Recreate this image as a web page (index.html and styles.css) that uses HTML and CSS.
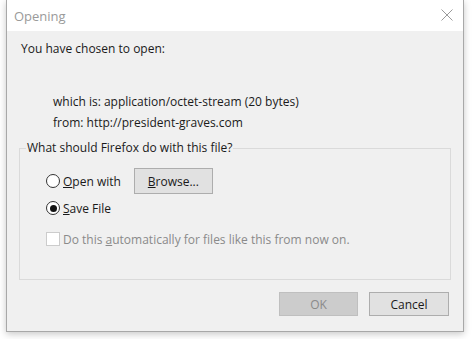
FILE: index.html
```html
<!DOCTYPE html>
<html lang="en">
<head>
    <meta charset="UTF-8">
    <title>Opening</title>
    <link rel="stylesheet" href="styles.css">
</head>
<body>
    <div class="window">
        <div class="titlebar">
            <span class="title">Opening</span>
            <svg class="close" width="12" height="12" viewBox="0 0 12 12">
                <path d="M0.5 0.5 L11.5 11.5 M11.5 0.5 L0.5 11.5" stroke="#9a9a9a" stroke-width="1" fill="none"/>
            </svg>
        </div>

        <div class="content">
            <p class="intro">You have chosen to open:</p>

            <div class="details">
                <p>which is: application/octet-stream (20 bytes)</p>
                <p>from: http://president-graves.com</p>
            </div>

            <fieldset class="choice">
                <legend>What should Firefox do with this file?</legend>

                <div class="option open-row">
                    <span class="radio"></span>
                    <span class="label"><u>O</u>pen with</span>
                    <button class="btn browse"><u>B</u>rowse...</button>
                </div>

                <div class="option save-row">
                    <span class="radio checked"></span>
                    <span class="label"><u>S</u>ave File</span>
                </div>

                <div class="option auto-row">
                    <span class="checkbox"></span>
                    <span class="label disabled">Do this <u>a</u>utomatically for files like this from now on.</span>
                </div>
            </fieldset>

            <div class="actions">
                <button class="btn" disabled>OK</button>
                <button class="btn">Cancel</button>
            </div>
        </div>
    </div>
</body>
</html>
```

FILE: styles.css
```css
* {
    margin: 0;
    padding: 0;
    box-sizing: border-box;
}

body {
    font-family: 'Open Sans', 'Noto Sans', sans-serif;
    font-size: 12px;
    background: #ffffff;
    color: #1a1a1a;
    width: 474px;
    height: 339px;
    overflow: hidden;
}

.window {
    margin-left: 6px;
    width: 458px;
    height: 332px;
    border: 1px solid #a8a8a8;
    border-top: none;
    box-shadow: 0 2px 7px rgba(0, 0, 0, 0.22);
    display: flex;
    flex-direction: column;
}

.titlebar {
    height: 31px;
    background: #ffffff;
    display: flex;
    align-items: center;
    justify-content: space-between;
    padding: 0 10px 0 7px;
}

.title {
    color: #9a9a9a;
    font-size: 13px;
}

.close {
    margin-top: -2px;
}

.content {
    flex: 1;
    background: #f0f0f0;
    padding: 0 12px;
}

.intro {
    margin-top: 9px;
    line-height: 18px;
    padding-left: 2px;
}

.details {
    margin-top: 33px;
    padding-left: 34px;
}

.details p {
    line-height: 21px;
}

.choice {
    margin-top: 6px;
    border: 1px solid #dadada;
    padding: 11px 6px 31px 6px;
}

.choice legend {
    line-height: 18px;
    padding: 0 1px;
    margin-left: 0;
}

.option {
    display: flex;
    align-items: center;
    margin-left: 20px;
}

.open-row {
    height: 26px;
}

.save-row {
    margin-top: 5px;
    height: 18px;
}

.auto-row {
    margin-top: 13px;
    height: 18px;
}

.radio {
    width: 14px;
    height: 14px;
    border: 1px solid #333333;
    border-radius: 50%;
    background: #ffffff;
    margin-right: 3px;
    display: flex;
    align-items: center;
    justify-content: center;
}

.radio.checked::before {
    content: '';
    width: 7px;
    height: 7px;
    border-radius: 50%;
    background: #111111;
}

.checkbox {
    width: 14px;
    height: 14px;
    border: 1px solid #cccccc;
    background: #ffffff;
    margin-right: 3px;
}

.label.disabled {
    color: #8a8a8a;
}

.btn {
    font-family: inherit;
    font-size: 12px;
    color: #1a1a1a;
    width: 79px;
    height: 24px;
    background: #e1e1e1;
    border: 1px solid #adadad;
}

.btn:disabled {
    background: #cccccc;
    border-color: #bfbfbf;
    color: #8a8a8a;
}

.browse {
    height: 26px;
    margin-left: 13px;
}

.actions {
    margin-top: 12px;
    margin-right: 2px;
    display: flex;
    justify-content: flex-end;
    gap: 11px;
}

.actions .btn:last-child {
    width: 80px;
}
```
